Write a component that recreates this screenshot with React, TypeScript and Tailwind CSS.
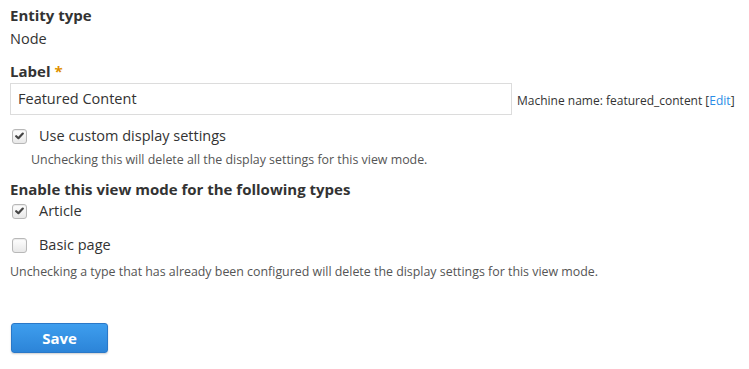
import React from "react";

function Check({ checked }: { checked: boolean }) {
  return (
    <span className="inline-flex h-[15px] w-[15px] items-center justify-center rounded-[3px] border border-[#b8b8b8] bg-gradient-to-b from-[#ffffff] to-[#e8e8e8] shadow-[inset_0_1px_1px_rgba(0,0,0,0.08)]">
      {checked && (
        <svg width="9" height="8" viewBox="0 0 9 8">
          <path d="M1.2 4.2 L3.4 6.2 L7.8 1.6" fill="none" stroke="#444" strokeWidth="2.2" strokeLinecap="round" strokeLinejoin="round" />
        </svg>
      )}
    </span>
  );
}

export default function App() {
  return (
    <div className="h-[369px] w-[749px] bg-white pl-[10px] pt-[5px] text-[#333] [font-family:'Open_Sans',sans-serif]">
      <div className="text-[15px] font-bold leading-[20px]">Entity type</div>
      <div className="mt-[4px] text-[14.5px] leading-[20px]">Node</div>
      <div className="mt-[12px] text-[15px] font-bold leading-[20px]">
        Label <span className="text-[#e09000]">*</span>
      </div>
      <div className="mt-[2px] flex items-center">
        <div className="flex h-[32px] w-[502px] items-center border border-[#dcdcdc] pl-[7px] text-[14.5px]">
          Featured Content
        </div>
        <div className="ml-[5px] mt-[4px] text-[12px]">
          Machine name: featured_content [<span className="text-[#2a8ce6]">Edit</span>]
        </div>
      </div>
      <div className="mt-[11px] flex items-center">
        <span className="ml-[2px] flex"><Check checked /></span>
        <span className="ml-[12px] text-[14.5px] leading-[20px]">Use custom display settings</span>
      </div>
      <div className="ml-[21px] mt-[5px] text-[12.4px] leading-[18px] text-[#555]">
        Unchecking this will delete all the display settings for this view mode.
      </div>
      <div className="mt-[10px] text-[15px] font-bold leading-[20px]">Enable this view mode for the following types</div>
      <div className="mt-[2px] flex items-center">
        <span className="ml-[2px] flex"><Check checked /></span>
        <span className="ml-[12px] text-[14.5px] leading-[20px]">Article</span>
      </div>
      <div className="mt-[14px] flex items-center">
        <span className="ml-[2px] flex"><Check checked={false} /></span>
        <span className="ml-[12px] text-[14.5px] leading-[20px]">Basic page</span>
      </div>
      <div className="mt-[8px] text-[12.4px] leading-[18px] text-[#555]">
        Unchecking a type that has already been configured will delete the display settings for this view mode.
      </div>
      <button className="ml-[1px] mt-[42px] flex h-[30px] w-[97px] items-center justify-center rounded-[3px] border border-[#2a78c8] bg-gradient-to-b from-[#3e9eee] to-[#2c84d8] text-[15px] font-bold text-white shadow-[0_1px_2px_rgba(0,0,0,0.2)]">
        Save
      </button>
    </div>
  );
}
